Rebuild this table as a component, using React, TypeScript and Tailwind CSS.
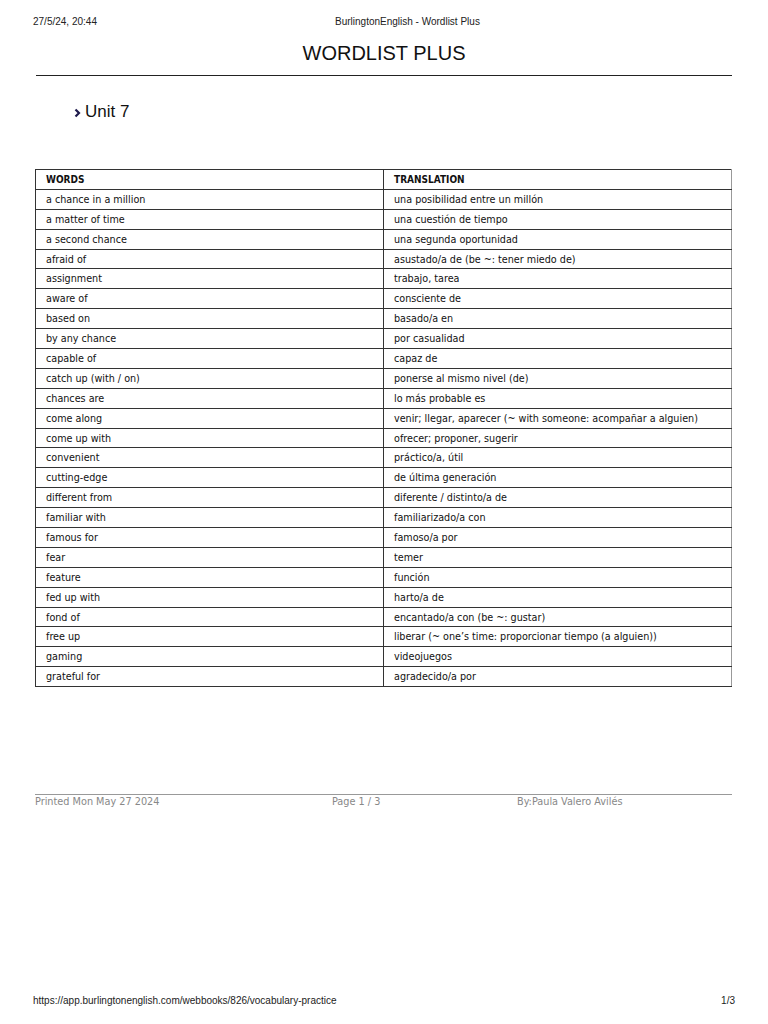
import React from "react";

const rows: [string, string][] = [
  ["a chance in a million", "una posibilidad entre un millón"],
  ["a matter of time", "una cuestión de tiempo"],
  ["a second chance", "una segunda oportunidad"],
  ["afraid of", "asustado/a de (be ~: tener miedo de)"],
  ["assignment", "trabajo, tarea"],
  ["aware of", "consciente de"],
  ["based on", "basado/a en"],
  ["by any chance", "por casualidad"],
  ["capable of", "capaz de"],
  ["catch up (with / on)", "ponerse al mismo nivel (de)"],
  ["chances are", "lo más probable es"],
  ["come along", "venir; llegar, aparecer (~ with someone: acompañar a alguien)"],
  ["come up with", "ofrecer; proponer, sugerir"],
  ["convenient", "práctico/a, útil"],
  ["cutting-edge", "de última generación"],
  ["different from", "diferente / distinto/a de"],
  ["familiar with", "familiarizado/a con"],
  ["famous for", "famoso/a por"],
  ["fear", "temer"],
  ["feature", "función"],
  ["fed up with", "harto/a de"],
  ["fond of", "encantado/a con (be ~: gustar)"],
  ["free up", "liberar (~ one’s time: proporcionar tiempo (a alguien))"],
  ["gaming", "videojuegos"],
  ["grateful for", "agradecido/a por"],
];

const tahoma = "font-['DejaVu_Sans_Condensed','DejaVu_Sans',sans-serif]";
const arial = "font-['Liberation_Sans',Arial,sans-serif]";

export default function App() {
  return (
    <div className="w-[768px] h-[1024px] bg-white flex flex-col text-[#111]">
      <div className={`${arial} flex pt-[16px] text-[10px] leading-[12px] text-[#222]`}>
        <span className="ml-[33px] w-[302px]">27/5/24, 20:44</span>
        <span>BurlingtonEnglish - Wordlist Plus</span>
      </div>
      <h1 className={`${arial} mt-[13px] text-center text-[20px] leading-[24px] text-[#111]`}>WORDLIST PLUS</h1>
      <div className="mt-[10px] ml-[36px] mr-[36px] border-t-[1.5px] border-[#222]" />
      <div className="mt-[26px] ml-[74px] flex items-center h-[20px]">
        <svg width="7" height="10" viewBox="0 0 7 10" className="mr-[4px] mt-[2px]">
          <path d="M1.5 1.5 L5 5 L1.5 8.5" fill="none" stroke="#1f1b4d" strokeWidth="2.2" />
        </svg>
        <span className={`${arial} text-[17px] leading-[20px] text-[#111]`}>Unit 7</span>
      </div>
      <table className={`${tahoma} mt-[47px] ml-[35px] w-[697px] border-collapse text-[10.7px] text-[#111]`}>
        <thead>
          <tr>
            <th className="h-[19.9px] w-1/2 border border-[#333] text-left font-bold text-[10px] leading-[12px] p-0 pl-[10px] pt-[1px]">WORDS</th>
            <th className="h-[19.9px] w-1/2 border border-[#333] border-r-[#999] text-left font-bold text-[10px] leading-[12px] p-0 pl-[10px] pt-[1px]">TRANSLATION</th>
          </tr>
        </thead>
        <tbody>
          {rows.map(([w, t]) => (
            <tr key={w}>
              <td className="h-[19.9px] border border-[#333] p-0 pl-[10px] pt-[1px] leading-[12px]">{w}</td>
              <td className="h-[19.9px] border border-[#333] border-r-[#999] p-0 pl-[10px] pt-[1px] leading-[12px]">{t}</td>
            </tr>
          ))}
        </tbody>
      </table>
      <div className="mt-[107px] ml-[35px] mr-[36px] border-t-[1.5px] border-[#999]" />
      <div className={`${tahoma} flex mt-[0px] text-[10.8px] leading-[14px] text-[#888]`}>
        <span className="ml-[35px] w-[297px]">Printed Mon May 27 2024</span>
        <span className="w-[185px]">Page 1 / 3</span>
        <span>By:Paula Valero Avilés</span>
      </div>
      <div className="flex-1" />
      <div className={`${arial} flex justify-between pb-[17px] pl-[33px] pr-[33px] text-[10px] leading-[12px] text-[#222]`}>
        <span>https://app.burlingtonenglish.com/webbooks/826/vocabulary-practice</span>
        <span>1/3</span>
      </div>
    </div>
  );
}
